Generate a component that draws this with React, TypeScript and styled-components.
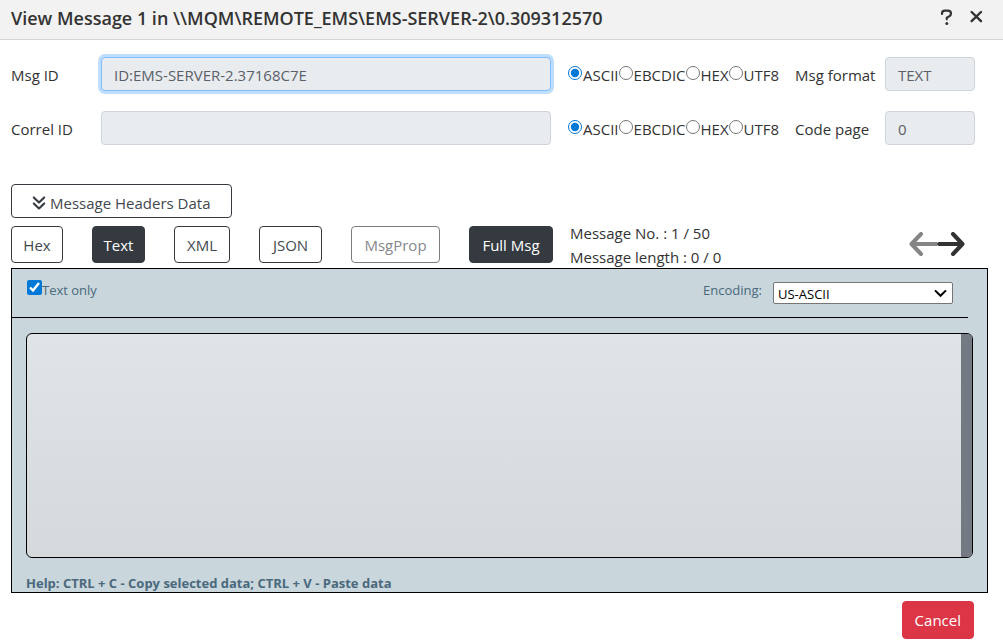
import React from "react";
import styled, { createGlobalStyle } from "styled-components";

const GlobalStyle = createGlobalStyle`
  *, *::before, *::after { box-sizing: border-box; }
  body {
    margin: 0;
    background: #fff;
    color: #333;
    font-family: "Open Sans", "Noto Sans", sans-serif;
    font-size: 15px;
    line-height: 24px;
  }
  button, input, select, textarea { font: inherit; margin: 0; }
`;

const Header = styled.header`
  display: flex;
  align-items: center;
  justify-content: space-between;
  height: 40px;
  padding: 0 19px 4px 11px;
  background: #f2f2f2;
  border-bottom: 1px solid #d6d6d6;
`;

const Title = styled.h1`
  margin: 0;
  font-size: 18px;
  font-weight: 600;
  line-height: 24px;
  white-space: nowrap;
`;

const HeaderActions = styled.div`
  display: flex;
  gap: 14px;
`;

const IconButton = styled.button`
  display: flex;
  align-items: center;
  padding: 0;
  border: 0;
  background: none;
  color: inherit;
`;

const Content = styled.main`
  padding: 17px 15px 0 11px;
`;

const Fields = styled.form`
  display: grid;
  grid-template-columns: 90px minmax(0, 1fr) 244px 90px 90px;
  row-gap: 20px;
  align-items: center;
  padding-right: 13px;
  margin-bottom: 39px;
`;

const FieldLabel = styled.label`
  padding-top: 1px;
  white-space: nowrap;
`;

const Field = styled.input<{ $active?: boolean }>`
  width: 100%;
  min-width: 0;
  height: 34px;
  padding: 2px 12px 0;
  border: 1px solid ${(p) => (p.$active ? "#80bdff" : "#ced4da")};
  border-radius: 4px;
  outline: none;
  background: #e9ecef;
  color: #5a6068;
  box-shadow: ${(p) => (p.$active ? "0 0 0 3px #bfdeff" : "none")};
`;

const RadioGroup = styled.div`
  display: flex;
  padding: 1px 0 0 17px;
`;

const RadioLabel = styled.label`
  display: flex;
  align-items: flex-start;
  white-space: nowrap;
`;

const Radio = styled.input`
  width: 14px;
  height: 14px;
  margin: 3px 1px 0 0;
  accent-color: #0078d7;
`;

const OutlineButton = styled.button`
  border: 1px solid #343a40;
  border-radius: 4px;
  background: #fff;
  color: #43484e;
  white-space: nowrap;
`;

const HeadersButton = styled(OutlineButton)`
  display: flex;
  align-items: center;
  gap: 4px;
  height: 34px;
  padding: 3px 20px 0;
`;

const ViewButton = styled(OutlineButton)<{ $width: number; $filled?: boolean }>`
  width: ${(p) => p.$width}px;
  height: 37px;
  padding: 0;
  background: ${(p) => (p.$filled ? "#343a40" : "#fff")};
  color: ${(p) => (p.$filled ? "#fff" : "#43484e")};
  &:disabled { opacity: 0.65; }
`;

const Toolbar = styled.div`
  display: flex;
  align-items: flex-start;
  margin-top: 8px;
  height: 42px;
`;

const Views = styled.div`
  display: flex;
  gap: 29px;
`;

const Counters = styled.div`
  margin: -5px 0 0 17px;
  white-space: nowrap;
`;

const Pager = styled.nav`
  display: flex;
  margin: 6px 23px 0 auto;
`;

const Panel = styled.section`
  padding: 0 14px;
  border: 1px solid #000;
  background: #c9d6db;
  color: #4a697d;
  font-size: 13px;
`;

const PanelBar = styled.div`
  display: flex;
  justify-content: space-between;
  align-items: flex-start;
  height: 49px;
  margin: 0 5px 15px -14px;
  padding: 9px 15px 0 15px;
  border-bottom: 1px solid #000;
`;

const CheckLabel = styled.label`
  display: flex;
  align-items: flex-start;
`;

const Checkbox = styled.input`
  width: 15px;
  height: 15px;
  margin-top: 2px;
  accent-color: #0078d7;
`;

const Encoding = styled.div`
  display: flex;
  gap: 11px;
`;

const SelectBox = styled.div`
  position: relative;
  height: 22px;
  margin-top: 4px;

  svg {
    position: absolute;
    right: 6px;
    top: 7px;
    pointer-events: none;
  }
`;

const Select = styled.select`
  display: block;
  appearance: none;
  width: 180px;
  height: 22px;
  padding: 2px 24px 0 4px;
  border: 1px solid #767676;
  border-radius: 2px;
  background: #fff;
  color: #000;
  font-size: 13px;
  line-height: 18px;
`;

const Editor = styled.div`
  display: flex;
  height: 225px;
  border: 1px solid #000;
  border-radius: 6px;
  overflow: hidden;
  background: linear-gradient(#dfe4e6, #d5d9db);
`;

const Message = styled.textarea`
  flex: 1;
  min-width: 0;
  padding: 8px;
  border: 0;
  outline: none;
  resize: none;
  background: none;
`;

const ScrollTrack = styled.div`
  width: 11px;
  background: #747a83;
`;

const Help = styled.p`
  margin: 13px 0 0;
  height: 21px;
  font-weight: 700;
`;

const Footer = styled.footer`
  display: flex;
  justify-content: flex-end;
  padding: 8px 14px 1px 0;
`;

const CancelButton = styled.button`
  height: 38px;
  padding: 0 12px 1px;
  border: 1px solid #dc3545;
  border-radius: 4px;
  background: #dc3545;
  color: #fff;
`;

const encodings = ["ASCII", "EBCDIC", "HEX", "UTF8"];

const views = [
  { label: "Hex", width: 52 },
  { label: "Text", width: 53, filled: true },
  { label: "XML", width: 56 },
  { label: "JSON", width: 63 },
  { label: "MsgProp", width: 89, disabled: true },
  { label: "Full Msg", width: 84, filled: true },
];

function EncodingRadios({ name, label }: { name: string; label: string }) {
  return (
    <RadioGroup role="radiogroup" aria-label={label}>
      {encodings.map((e, i) => (
        <RadioLabel key={e}>
          <Radio type="radio" name={name} defaultChecked={i === 0} />
          {e}
        </RadioLabel>
      ))}
    </RadioGroup>
  );
}

export default function App() {
  return (
    <>
      <GlobalStyle />
      <Header>
        <Title>{"View Message 1 in \\\\MQM\\REMOTE_EMS\\EMS-SERVER-2\\0.309312570"}</Title>
        <HeaderActions>
          <IconButton aria-label="Help">
            <svg width="16" height="20" viewBox="0 0 16 20" fill="none" stroke="#333" strokeWidth="2.2" strokeLinecap="round" strokeLinejoin="round">
              <path d="M4 6V5.4Q4 2.6 6.8 2.6H9.6Q13 2.6 13 5.6Q13 7.4 11.2 8.4L8.8 9.7V11.3" />
              <circle cx="8.8" cy="15.4" r="1.5" fill="#333" stroke="none" />
            </svg>
          </IconButton>
          <IconButton aria-label="Close">
            <svg width="16" height="20" viewBox="0 0 16 20" fill="none" stroke="#333" strokeWidth="2.4" strokeLinecap="round">
              <path d="M3.6 4L13 13.2M13 4L3.6 13.2" />
            </svg>
          </IconButton>
        </HeaderActions>
      </Header>
      <Content>
        <Fields>
          <FieldLabel htmlFor="msg-id">Msg ID</FieldLabel>
          <Field id="msg-id" readOnly $active defaultValue="ID:EMS-SERVER-2.37168C7E" />
          <EncodingRadios name="msg-encoding" label="Msg ID encoding" />
          <FieldLabel htmlFor="format">Msg format</FieldLabel>
          <Field id="format" readOnly defaultValue="TEXT" />
          <FieldLabel htmlFor="correl-id">Correl ID</FieldLabel>
          <Field id="correl-id" readOnly />
          <EncodingRadios name="correl-encoding" label="Correl ID encoding" />
          <FieldLabel htmlFor="code-page">Code page</FieldLabel>
          <Field id="code-page" readOnly defaultValue="0" />
        </Fields>
        <HeadersButton>
          <svg width="14" height="16" viewBox="0 0 14 16" fill="none" stroke="#343a40" strokeWidth="2.1" strokeLinecap="round" strokeLinejoin="round">
            <path d="M1.8 2.4L7 7.4L12.2 2.4M1.8 8.4L7 13.4L12.2 8.4" />
          </svg>
          Message Headers Data
        </HeadersButton>
        <Toolbar>
          <Views>
            {views.map((v) => (
              <ViewButton key={v.label} $width={v.width} $filled={v.filled} disabled={v.disabled}>
                {v.label}
              </ViewButton>
            ))}
          </Views>
          <Counters>
            <div>Message No. : 1 / 50</div>
            <div>Message length : 0 / 0</div>
          </Counters>
          <Pager>
            <IconButton aria-label="Previous message" disabled>
              <svg width="28" height="24" viewBox="0 0 28 24" fill="none" stroke="#858585" strokeWidth="4" strokeLinecap="round" strokeLinejoin="round">
                <path d="M12 2L2.5 12L12 22M3 12H28" />
              </svg>
            </IconButton>
            <IconButton aria-label="Next message">
              <svg width="28" height="24" viewBox="0 0 28 24" fill="none" stroke="#333" strokeWidth="4" strokeLinecap="round" strokeLinejoin="round">
                <path d="M16 2L25.5 12L16 22M25 12H2" />
              </svg>
            </IconButton>
          </Pager>
        </Toolbar>
        <Panel>
          <PanelBar>
            <CheckLabel>
              <Checkbox type="checkbox" defaultChecked />
              Text only
            </CheckLabel>
            <Encoding>
              <label htmlFor="encoding">Encoding:</label>
              <SelectBox>
                <Select id="encoding">
                  <option>US-ASCII</option>
                  <option>UTF-8</option>
                </Select>
                <svg width="13" height="9" viewBox="0 0 13 9" fill="none" stroke="#000" strokeWidth="2">
                  <path d="M1 1.4L6.5 6.8L12 1.4" />
                </svg>
              </SelectBox>
            </Encoding>
          </PanelBar>
          <Editor>
            <Message aria-label="Message text" />
            <ScrollTrack />
          </Editor>
          <Help>Help: CTRL + C - Copy selected data; CTRL + V - Paste data</Help>
        </Panel>
        <Footer>
          <CancelButton>Cancel</CancelButton>
        </Footer>
      </Content>
    </>
  );
}
